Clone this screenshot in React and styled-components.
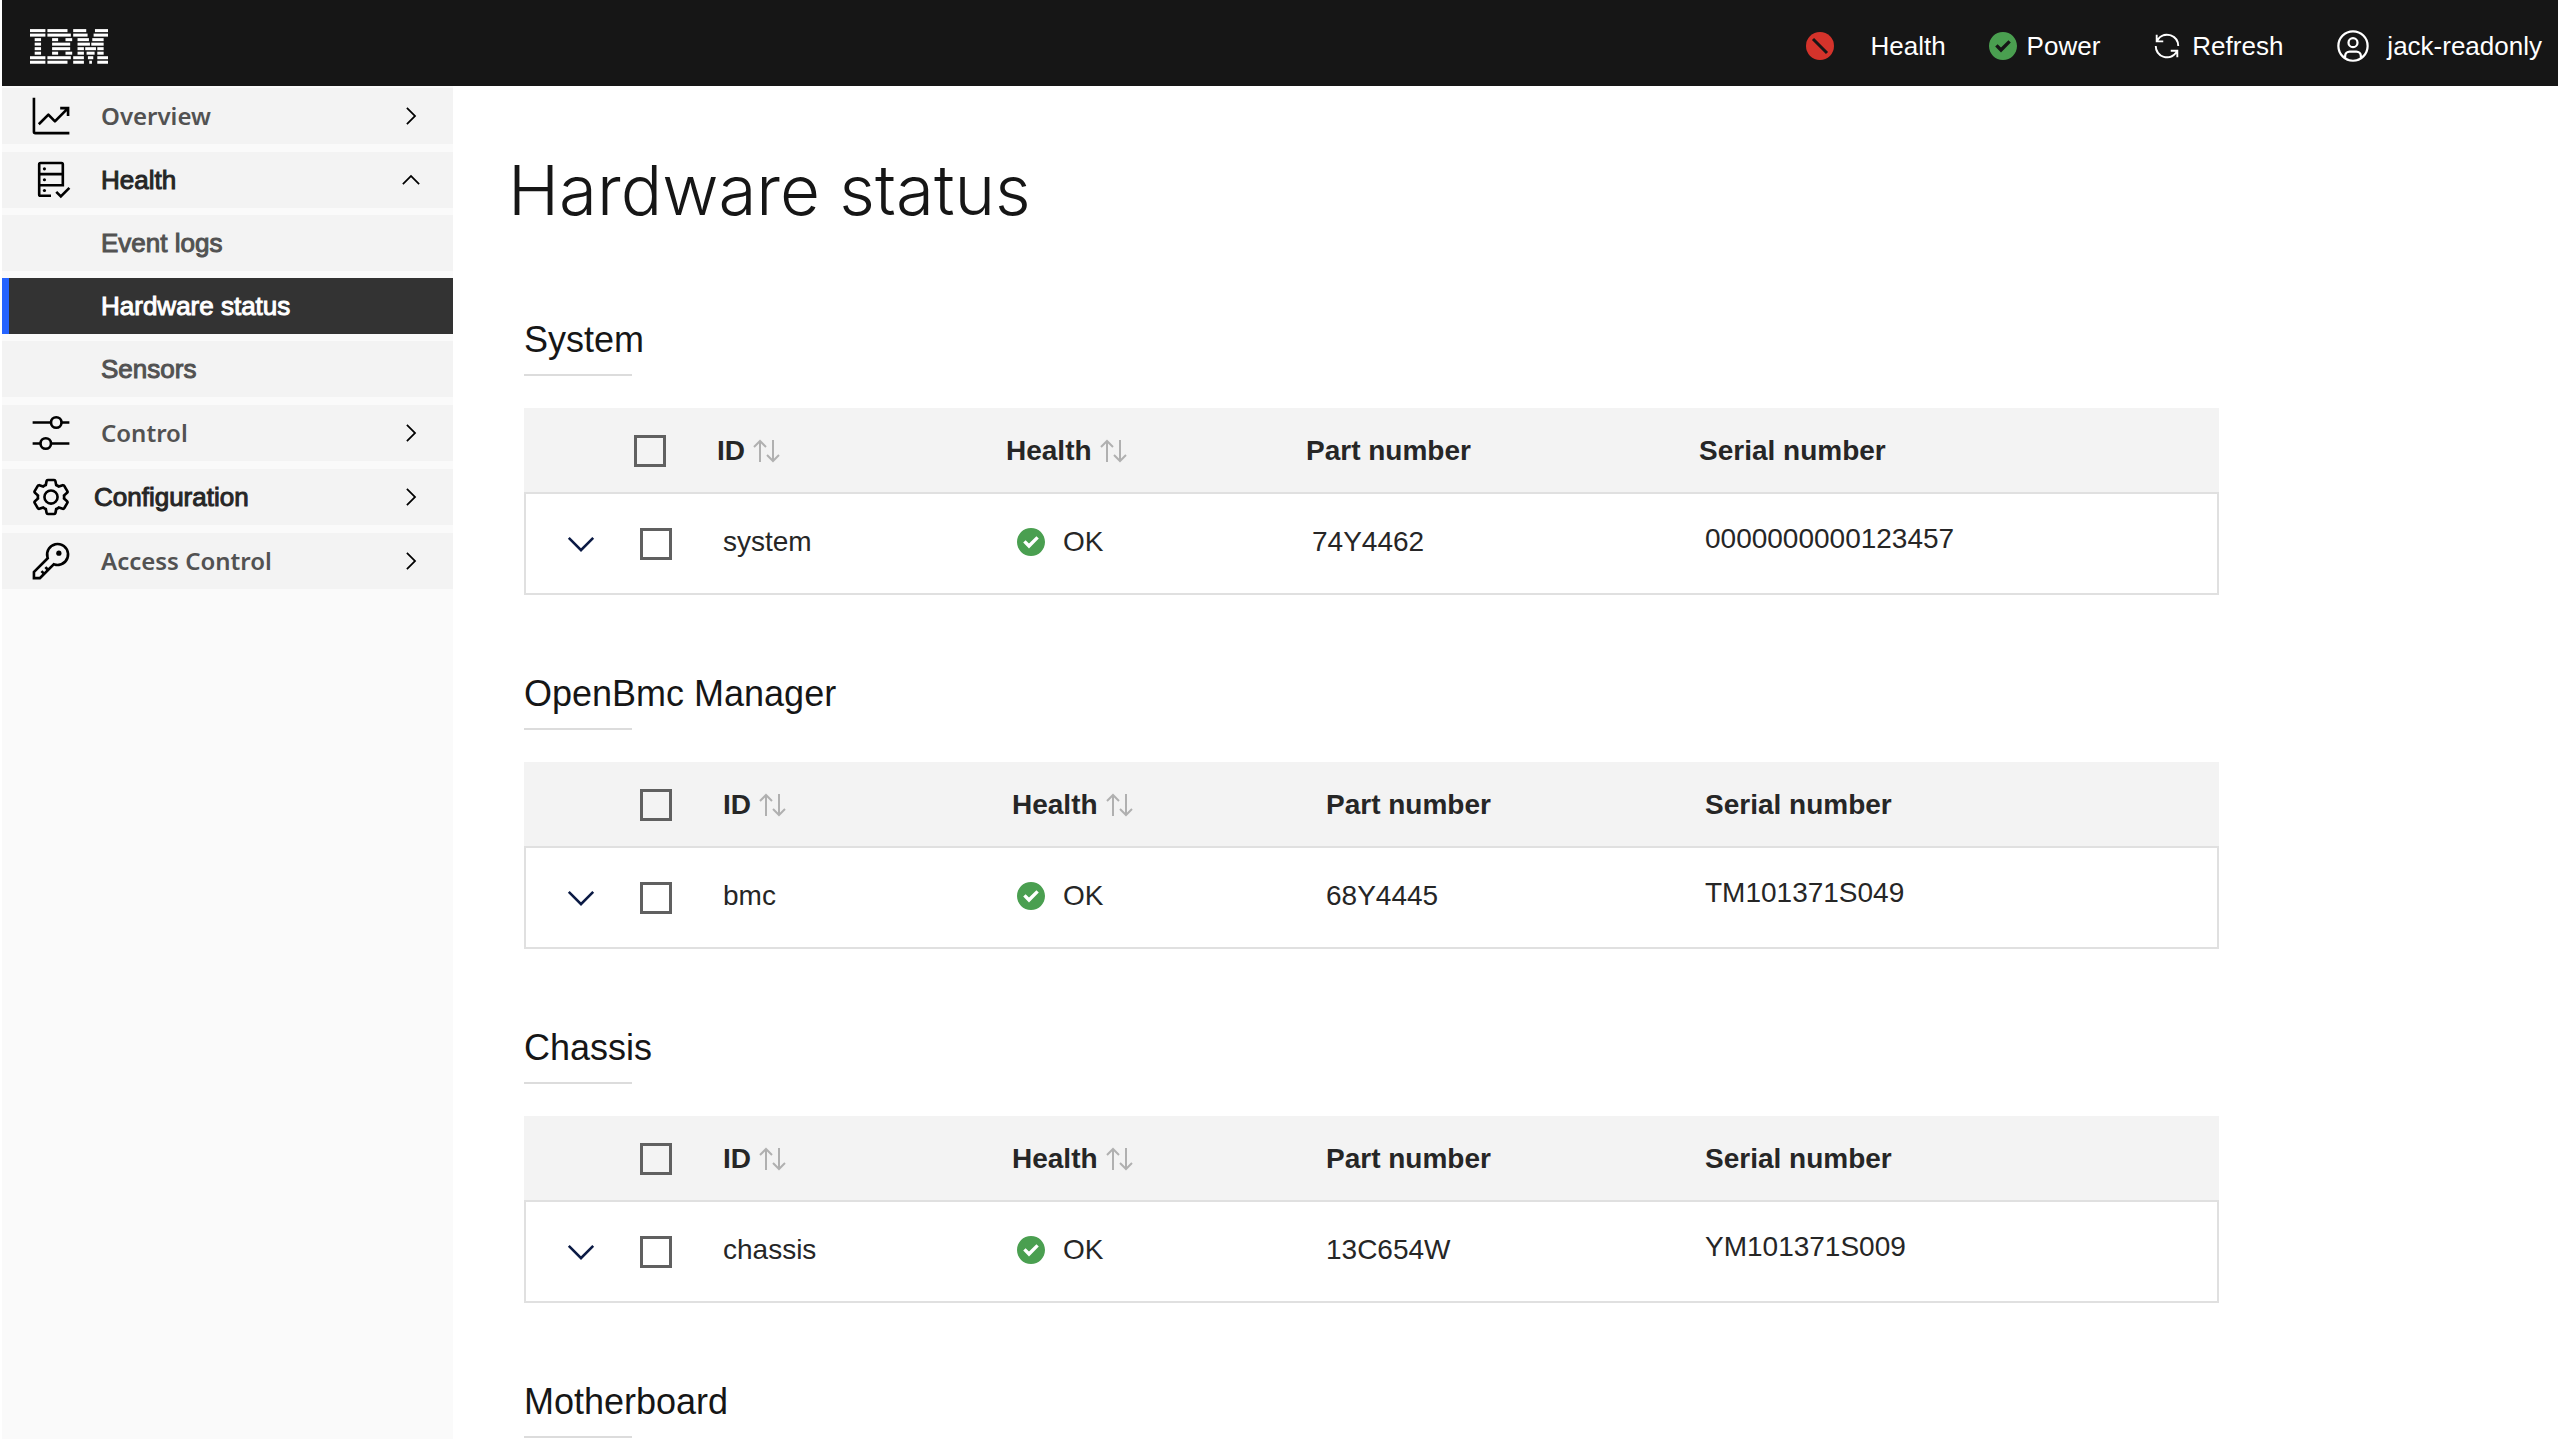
import React, { useState } from "react";
import styled, { createGlobalStyle } from "styled-components";

const GlobalStyle = createGlobalStyle`
  * {
    box-sizing: border-box;
  }

  body {
    margin: 0;
    background: #ffffff;
    color: #161616;
    font-family: "Liberation Sans", Arial, sans-serif;
  }

  button,
  input {
    font: inherit;
  }
`;

const Page = styled.div`
  display: flex;
  flex-direction: column;
  height: 100vh;
  padding: 0 2px;
  overflow: hidden;
`;

const Header = styled.header`
  display: flex;
  flex: none;
  align-items: center;
  justify-content: space-between;
  height: 86px;
  padding: 6px 16px 0 28px;
  background: #161616;
  color: #ffffff;
`;

const LogoLink = styled.a`
  display: flex;
  color: #ffffff;
`;

const HeaderActions = styled.nav`
  display: flex;
  align-items: center;
`;

const HeaderButton = styled.button`
  display: flex;
  align-items: center;
  gap: ${(props) => props.$gap || "10px"};
  margin-left: ${(props) => props.$space || "43px"};
  padding: 0;
  border: none;
  background: none;
  color: inherit;
  font-size: 26px;
  line-height: 32px;
  cursor: pointer;
`;

const Icon = styled.svg`
  display: block;
  flex: none;
  width: ${(props) => props.$size}px;
  height: ${(props) => props.$size}px;
  fill: currentColor;
`;

const Body = styled.div`
  display: flex;
  flex: 1;
  min-height: 0;
`;

const Sidebar = styled.nav`
  flex: none;
  width: 451px;
  padding-top: 2px;
  background: #fafafa;
`;

const NavList = styled.ul`
  display: flex;
  flex-direction: column;
  gap: 8px;
  margin: 0;
  padding: 0;
  list-style: none;
`;

const SubList = styled.ul`
  display: flex;
  flex-direction: column;
  gap: 7px;
  margin: 7px 0 0;
  padding: 0;
  list-style: none;
`;

const NavButton = styled.button`
  display: grid;
  grid-template-columns: 42px 1fr 32px;
  column-gap: ${(props) => (props.$close ? "22px" : "29px")};
  align-items: center;
  width: 100%;
  height: 56px;
  padding: 0 24px 0 28px;
  border: none;
  background: #f3f3f3;
  color: ${(props) => (props.$strong ? "#262626" : "#525252")};
  font-family: ${(props) =>
    props.$plex ? '"Noto Sans", sans-serif' : '"Liberation Sans", sans-serif'};
  font-size: ${(props) => (props.$plex ? "24px" : "26px")};
  font-weight: ${(props) => (props.$plex ? 600 : 400)};
  line-height: 32px;
  text-align: left;
  -webkit-text-stroke: ${(props) => (props.$plex ? "0" : "1px")};
  cursor: pointer;

  svg {
    color: #000000;
  }
`;

const SubLink = styled.a`
  display: flex;
  align-items: center;
  height: 56px;
  padding-left: 92px;
  border-left: 7px solid ${(props) => (props.$active ? "#2563ff" : "#f3f3f3")};
  background: ${(props) => (props.$active ? "#333333" : "#f3f3f3")};
  color: ${(props) => (props.$active ? "#ffffff" : "#525252")};
  font-size: 26px;
  line-height: 32px;
  text-decoration: none;
  -webkit-text-stroke: 1px;
`;

const Main = styled.main`
  flex: 1;
  min-width: 0;
  padding: 60px 339px 0 71px;
`;

const Title = styled.h1`
  margin: 0 0 84px -16px;
  font-family: Inter, sans-serif;
  font-size: 69px;
  font-weight: 300;
  line-height: 88px;
`;

const Section = styled.section`
  margin-bottom: 77px;
`;

const SectionTitle = styled.h2`
  margin: 0;
  font-size: 36px;
  font-weight: 400;
  line-height: 44px;

  &::after {
    display: block;
    width: 108px;
    height: 2px;
    margin: 12px 0 32px;
    background: #dcdcdc;
    content: "";
  }
`;

const Table = styled.table`
  width: 100%;
  table-layout: fixed;
  border-spacing: 0;
  font-size: 28px;
  line-height: 36px;
  text-align: left;
`;

const Col = styled.col`
  width: ${(props) => props.$width};
`;

const HeadCell = styled.th`
  height: 84px;
  padding: 2px 0 0 ${(props) => (props.$tight ? "0" : "6px")};
  background: #f3f3f3;
  color: #262626;
  font-weight: 700;
`;

const Cell = styled.td`
  height: 103px;
  padding: 0 0 ${(props) => (props.$control ? "0" : "4px")} 6px;
  border: solid #e0e0e0;
  border-width: 2px 0;
  color: #262626;

  &:first-child {
    padding-left: 34px;
    border-left-width: 2px;
  }

  &:last-child {
    padding-bottom: 10px;
    border-right-width: 2px;
  }
`;

const SortButton = styled.button`
  display: flex;
  align-items: center;
  gap: 6px;
  padding: 0;
  border: none;
  background: none;
  color: inherit;
  font-weight: 700;
  cursor: pointer;

  svg {
    color: #b0b0b0;
  }
`;

const ExpandButton = styled.button`
  display: block;
  padding: 0;
  border: none;
  background: none;
  color: #0b1a44;
  cursor: pointer;
`;

const Checkbox = styled.input`
  display: block;
  width: 32px;
  height: 32px;
  margin: 0;
  border: 3px solid #606060;
  appearance: none;
  cursor: pointer;

  &:checked {
    background: #161616;
  }
`;

const Status = styled.span`
  display: flex;
  align-items: center;
  gap: 18px;
  padding-left: 5px;

  svg {
    color: #4a9f50;
  }
`;

const LOGO_BARS = [
  [[0, 46], [52, 112], [129, 168], [194, 233]],
  [[0, 46], [52, 122], [129, 172], [190, 233]],
  [[14, 33], [66, 84], [106, 126], [142, 176], [186, 220]],
  [[14, 33], [66, 120], [142, 179], [183, 220]],
  [[14, 33], [66, 120], [142, 161], [165, 197], [201, 220]],
  [[14, 33], [66, 84], [106, 126], [142, 161], [169, 193], [201, 220]],
  [[0, 46], [52, 122], [129, 161], [173, 189], [201, 233]],
  [[0, 46], [52, 112], [129, 161], [177, 185], [201, 233]],
];

const Logo = () => (
  <svg width="78" height="35" viewBox="0 0 233 104" fill="currentColor">
    {LOGO_BARS.map((bars, row) =>
      bars.map(([from, to]) => (
        <rect
          key={`${row}-${from}`}
          x={from}
          y={row * 13.5}
          width={to - from}
          height="9"
        />
      ))
    )}
  </svg>
);

const ChevronIcon = ({ direction, size }) => {
  const paths = {
    right: "M22 16 12 26 10.6 24.6 19.2 16 10.6 7.4 12 6z",
    up: "M16 10 26 20 24.6 21.4 16 12.8 7.4 21.4 6 20z",
    down: "M16 22 6 12 7.4 10.6 16 19.2 24.6 10.6 26 12z",
  };
  return (
    <Icon $size={size} viewBox="0 0 32 32">
      <path d={paths[direction]} />
    </Icon>
  );
};

const OverviewIcon = () => (
  <Icon $size={42} viewBox="0 0 32 32">
    <path d="M4 2H2v26a2 2 0 0 0 2 2h26v-2H4z" />
    <path d="M30 9h-7v2h3.59L19 18.59l-4.29-4.3a1 1 0 0 0-1.42 0L6 21.59 7.41 23 14 16.41l4.29 4.3a1 1 0 0 0 1.42 0L28 12.41V16h2z" />
  </Icon>
);

const HealthIcon = () => (
  <Icon $size={42} viewBox="0 0 32 32">
    <path
      d="M16 28H8a1 1 0 0 1-1-1V4a1 1 0 0 1 1-1h16a1 1 0 0 1 1 1v16H7M7 11.5h18M20 25l3.5 3.5L30 22"
      fill="none"
      stroke="currentColor"
      strokeWidth="2"
    />
    <circle cx="11" cy="7.5" r="1.2" />
    <circle cx="11" cy="15.8" r="1.2" />
    <circle cx="11" cy="24" r="1.2" />
  </Icon>
);

const ControlIcon = () => (
  <Icon $size={42} viewBox="0 0 32 32">
    <path
      d="M2 8h14M24 8h6M2 24h6M16 24h14"
      stroke="currentColor"
      strokeWidth="2"
    />
    <circle cx="20" cy="8" r="4" fill="none" stroke="currentColor" strokeWidth="2" />
    <circle cx="12" cy="24" r="4" fill="none" stroke="currentColor" strokeWidth="2" />
  </Icon>
);

const ConfigurationIcon = () => (
  <Icon $size={42} viewBox="0 0 32 32">
    <path d="M27 16.76v-1.53l1.92-1.68A2 2 0 0 0 29.3 11l-2.36-4a2 2 0 0 0-1.73-1 2 2 0 0 0-.64.1l-2.43.82a11.35 11.35 0 0 0-1.31-.75l-.51-2.52a2 2 0 0 0-2-1.61h-4.68a2 2 0 0 0-2 1.61l-.51 2.52a11.48 11.48 0 0 0-1.32.75l-2.38-.86A2 2 0 0 0 6.79 6a2 2 0 0 0-1.73 1L2.7 11a2 2 0 0 0 .41 2.51L5 15.24v1.53l-1.89 1.68A2 2 0 0 0 2.7 21l2.36 4a2 2 0 0 0 1.73 1 2 2 0 0 0 .64-.1l2.43-.82a11.35 11.35 0 0 0 1.31.75l.51 2.52a2 2 0 0 0 2 1.61h4.72a2 2 0 0 0 2-1.61l.51-2.52a11.48 11.48 0 0 0 1.32-.75l2.42.82a2 2 0 0 0 .64.1 2 2 0 0 0 1.73-1l2.28-4a2 2 0 0 0-.41-2.51zM25.21 24l-3.43-1.16a8.86 8.86 0 0 1-2.71 1.57L18.36 28h-4.72l-.71-3.55a9.36 9.36 0 0 1-2.7-1.57L6.79 24l-2.36-4 2.72-2.4a8.9 8.9 0 0 1 0-3.13L4.43 12l2.36-4 3.43 1.16a8.86 8.86 0 0 1 2.71-1.57L13.64 4h4.72l.71 3.55a9.36 9.36 0 0 1 2.7 1.57L25.21 8l2.36 4-2.72 2.4a8.9 8.9 0 0 1 0 3.13L27.57 20z" />
    <path d="M16 22a6 6 0 1 1 6-6 5.94 5.94 0 0 1-6 6zm0-10a3.91 3.91 0 0 0-4 4 3.91 3.91 0 0 0 4 4 3.91 3.91 0 0 0 4-4 3.91 3.91 0 0 0-4-4z" />
  </Icon>
);

const AccessIcon = () => (
  <Icon $size={42} viewBox="0 0 32 32">
    <path d="M21 2a8.998 8.998 0 0 0-8.612 11.612L2 24v6h6l10.388-10.388A9 9 0 1 0 21 2zm0 16a7.013 7.013 0 0 1-2.032-.302l-1.147-.348-.847.847-3.181 3.181L12.414 20 11 21.414l1.379 1.379-1.586 1.586L9.414 23 8 24.414l1.379 1.379L7.172 28H4v-3.172l9.802-9.802.848-.847-.348-1.147A7 7 0 1 1 21 18z" />
    <circle cx="22" cy="10" r="2" />
  </Icon>
);

const CriticalIcon = () => (
  <Icon $size={28} viewBox="0 0 28 28">
    <circle cx="14" cy="14" r="14" fill="#d4332b" />
    <path d="m7 7 14 14" stroke="#161616" strokeWidth="3" />
  </Icon>
);

const OkIcon = () => (
  <Icon $size={28} viewBox="1 1 14 14">
    <path d="M8 1C4.1 1 1 4.1 1 8s3.1 7 7 7 7-3.1 7-7-3.1-7-7-7zM7 11.2 4.1 8.3l1.2-1.2L7 8.8l3.7-3.7 1.2 1.2z" />
  </Icon>
);

const RefreshIcon = () => (
  <Icon $size={30} viewBox="0 0 32 32">
    <path d="M12 10H6.78A11 11 0 0 1 27 16h2A13 13 0 0 0 6 7.68V4H4v8h8zM20 22h5.22A11 11 0 0 1 5 16H3a13 13 0 0 0 23 8.32V28h2v-8h-8z" />
  </Icon>
);

const UserIcon = () => (
  <Icon $size={36} viewBox="0 0 32 32">
    <path d="M16 8a5 5 0 1 0 5 5 5 5 0 0 0-5-5zm0 8a3 3 0 1 1 3-3 3 3 0 0 1-3 3z" />
    <path d="M16 2a14 14 0 1 0 14 14A14.016 14.016 0 0 0 16 2zm-6 24.377V25a3.003 3.003 0 0 1 3-3h6a3.003 3.003 0 0 1 3 3v1.377a11.899 11.899 0 0 1-12 0zm13.993-1.45A5.002 5.002 0 0 0 19 20h-6a5.002 5.002 0 0 0-4.992 4.927 12 12 0 1 1 15.985 0z" />
  </Icon>
);

const SortIcon = () => (
  <Icon $size={30} viewBox="0 0 30 30">
    <path
      d="M9 26V5M3 11l6-6 6 6M22 4v21M16 19l6 6 6-6"
      fill="none"
      stroke="currentColor"
      strokeWidth="2"
    />
  </Icon>
);

const NAV_ITEMS = [
  { label: "Overview", icon: OverviewIcon, plex: true },
  {
    label: "Health",
    icon: HealthIcon,
    strong: true,
    children: ["Event logs", "Hardware status", "Sensors"],
  },
  { label: "Control", icon: ControlIcon, plex: true },
  { label: "Configuration", icon: ConfigurationIcon, strong: true, close: true },
  { label: "Access Control", icon: AccessIcon, plex: true },
];

const SECTIONS = [
  {
    title: "System",
    id: "system",
    part: "74Y4462",
    serial: "0000000000123457",
    tight: true,
  },
  {
    title: "OpenBmc Manager",
    id: "bmc",
    part: "68Y4445",
    serial: "TM101371S049",
  },
  {
    title: "Chassis",
    id: "chassis",
    part: "13C654W",
    serial: "YM101371S009",
  },
  { title: "Motherboard" },
];

const HardwareTable = ({ section }) => {
  const [selected, setSelected] = useState(false);
  const toggle = () => setSelected(!selected);
  const { id, part, serial, tight } = section;

  return (
    <Table>
      <colgroup>
        <Col $width="110px" />
        <Col $width="83px" />
        <Col $width="289px" />
        <Col $width={tight ? "300px" : "314px"} />
        <Col $width={tight ? "393px" : "379px"} />
        <Col />
      </colgroup>
      <thead>
        <tr>
          <HeadCell />
          <HeadCell $tight={tight}>
            <Checkbox
              type="checkbox"
              aria-label={`Select all in ${section.title}`}
              checked={selected}
              onChange={toggle}
            />
          </HeadCell>
          <HeadCell $tight={tight}>
            <SortButton>
              ID <SortIcon />
            </SortButton>
          </HeadCell>
          <HeadCell $tight={tight}>
            <SortButton>
              Health <SortIcon />
            </SortButton>
          </HeadCell>
          <HeadCell $tight={tight}>Part number</HeadCell>
          <HeadCell $tight={tight}>Serial number</HeadCell>
        </tr>
      </thead>
      <tbody>
        <tr>
          <Cell $control>
            <ExpandButton aria-label={`Expand ${id}`}>
              <ChevronIcon direction="down" size={42} />
            </ExpandButton>
          </Cell>
          <Cell $control>
            <Checkbox
              type="checkbox"
              aria-label={`Select ${id}`}
              checked={selected}
              onChange={toggle}
            />
          </Cell>
          <Cell>{id}</Cell>
          <Cell>
            <Status>
              <OkIcon /> OK
            </Status>
          </Cell>
          <Cell>{part}</Cell>
          <Cell>{serial}</Cell>
        </tr>
      </tbody>
    </Table>
  );
};

const PowerIcon = styled.span`
  color: #4a9f50;
`;

const App = () => {
  return (
    <>
      <GlobalStyle />
      <Page>
        <Header>
          <LogoLink href="#" aria-label="IBM">
            <Logo />
          </LogoLink>
          <HeaderActions>
            <HeaderButton $gap="36px">
              <CriticalIcon /> Health
            </HeaderButton>
            <HeaderButton>
              <PowerIcon>
                <OkIcon />
              </PowerIcon>
              Power
            </HeaderButton>
            <HeaderButton $space="52px">
              <RefreshIcon /> Refresh
            </HeaderButton>
            <HeaderButton $space="52px" $gap="16px">
              <UserIcon /> jack-readonly
            </HeaderButton>
          </HeaderActions>
        </Header>
        <Body>
          <Sidebar>
            <NavList>
              {NAV_ITEMS.map((item) => (
                <li key={item.label}>
                  <NavButton
                    $plex={item.plex}
                    $strong={item.strong}
                    $close={item.close}
                  >
                    <item.icon />
                    {item.label}
                    <ChevronIcon
                      direction={item.children ? "up" : "right"}
                      size={28}
                    />
                  </NavButton>
                  {item.children && (
                    <SubList>
                      {item.children.map((label) => (
                        <li key={label}>
                          <SubLink href="#" $active={label === "Hardware status"}>
                            {label}
                          </SubLink>
                        </li>
                      ))}
                    </SubList>
                  )}
                </li>
              ))}
            </NavList>
          </Sidebar>
          <Main>
            <Title>Hardware status</Title>
            {SECTIONS.map((section) => (
              <Section key={section.title}>
                <SectionTitle>{section.title}</SectionTitle>
                {section.id && <HardwareTable section={section} />}
              </Section>
            ))}
          </Main>
        </Body>
      </Page>
    </>
  );
};

export default App;
